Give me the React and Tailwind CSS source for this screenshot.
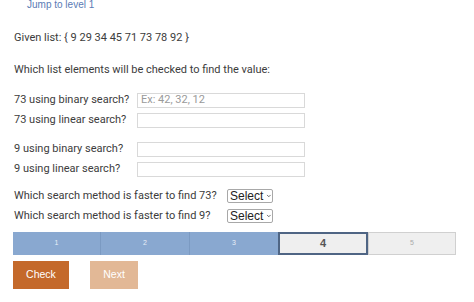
import React from "react";

const Row = ({ label, placeholder }) => (
  <div className="flex items-center h-[15px]">
    <div className="w-[123px] shrink-0 whitespace-nowrap text-[11px]">{label}</div>
    <div className="w-[168px] shrink-0 h-[15px] border border-[#d9d9d9] flex items-center pl-[3px] text-[11px] text-[#9a9a9a] whitespace-nowrap">
      {placeholder}
    </div>
  </div>
);

const Sel = ({ label }) => (
  <div className="flex items-center h-[14px]">
    <div className="w-[213px] shrink-0 whitespace-nowrap text-[11px]">{label}</div>
    <div className="h-[14px] w-[46px] shrink-0 border border-[#a8a8a8] rounded-[2px] flex items-center pl-[2px] text-[12px] text-[#222] leading-none" style={{ fontFamily: '"Liberation Sans", Arial, sans-serif' }}>
      Select
      <svg width="8" height="6" viewBox="0 0 8 6" className="ml-[3px]">
        <path d="M1.5 1.5 L4 4 L6.5 1.5" fill="none" stroke="#333" strokeWidth="1" />
      </svg>
    </div>
  </div>
);

export default function App() {
  return (
    <div className="w-[474px] h-[302px] bg-white overflow-hidden relative text-[#3c3c3c]" style={{ fontFamily: "Roboto, sans-serif" }}>
      <div className="pl-[27px] h-[12px] -mt-[1px] text-[10px] leading-[12px] text-[#5a7bb5] whitespace-nowrap" style={{ fontFamily: '"Liberation Sans", Arial, sans-serif' }}>
        Jump to level 1
      </div>
      <div className="pl-[14px] mt-[20px] h-[14px] leading-[14px] text-[11px] whitespace-nowrap">Given list: {"{"} 9 29 34 45 71 73 78 92 {"}"}</div>
      <div className="pl-[14px] mt-[18px] h-[14px] leading-[14px] text-[11px] whitespace-nowrap">Which list elements will be checked to find the value:</div>
      <div className="pl-[14px] mt-[16px] flex flex-col">
        <Row label="73 using binary search?" placeholder="Ex: 42, 32, 12" />
        <div className="mt-[5px]"><Row label="73 using linear search?" /></div>
        <div className="mt-[14px]"><Row label="9 using binary search?" /></div>
        <div className="mt-[5px]"><Row label="9 using linear search?" /></div>
      </div>
      <div className="pl-[14px] mt-[12px] flex flex-col">
        <Sel label="Which search method is faster to find 73?" />
        <div className="mt-[6px]"><Sel label="Which search method is faster to find 9?" /></div>
      </div>
      <div className="ml-[13px] mt-[9px] w-[443px] h-[23px] flex text-[7px]" style={{ fontFamily: '"Liberation Sans", Arial, sans-serif' }}>
        <div className="w-[88px] bg-[#89a8d0] border-r border-[#7b9ac2] flex items-center justify-center text-[#e8eef7]">1</div>
        <div className="w-[89px] bg-[#89a8d0] border-r border-[#7b9ac2] flex items-center justify-center text-[#e8eef7]">2</div>
        <div className="w-[88px] bg-[#89a8d0] flex items-center justify-center text-[#e8eef7]">3</div>
        <div className="w-[90px] bg-[#efefef] border-2 border-[#4f6584] flex items-center justify-center text-[11px] font-bold text-[#555]">4</div>
        <div className="w-[88px] bg-[#efefef] border border-[#d0d0d0] flex items-center justify-center text-[#aaa]">5</div>
      </div>
      <div className="ml-[13px] mt-[6px] flex gap-[21px]" style={{ fontFamily: '"Liberation Sans", Arial, sans-serif' }}>
        <div className="w-[56px] h-[28px] bg-[#c4692b] text-white text-[10.5px] flex items-center justify-center">Check</div>
        <div className="w-[48px] h-[28px] bg-[#e2b896] text-white text-[10.5px] flex items-center justify-center">Next</div>
      </div>
    </div>
  );
}
